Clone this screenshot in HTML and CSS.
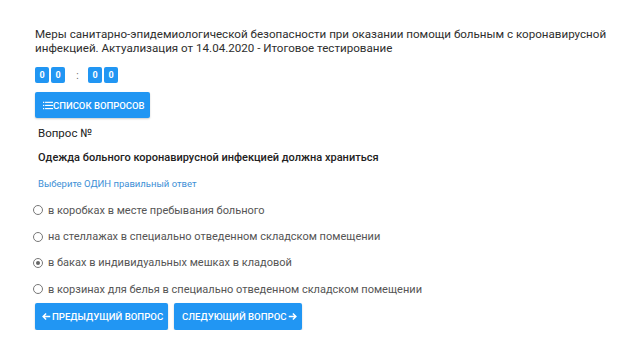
FILE: index.html
```html
<!DOCTYPE html>
<html lang="ru">
<head>
<meta charset="utf-8">
<link rel="stylesheet" href="styles.css">
</head>
<body>
<main class="page">
  <h1 class="title">Меры санитарно-эпидемиологической безопасности при оказании помощи больным с коронавирусной инфекцией. Актуализация от 14.04.2020 - Итоговое тестирование</h1>
  <div class="timer">
    <span class="digit">0</span><span class="digit">0</span><span class="colon">:</span><span class="digit">0</span><span class="digit">0</span>
  </div>
  <button class="btn btn-list"><svg class="ico" viewBox="0 0 12 10" width="10" height="9"><rect x="0" y="0.5" width="1.5" height="1.5" fill="#fff"/><rect x="0" y="4.2" width="1.5" height="1.5" fill="#fff"/><rect x="0" y="8" width="1.5" height="1.5" fill="#fff"/><rect x="2.5" y="0.5" width="9.5" height="1.4" fill="#fff"/><rect x="2.5" y="4.2" width="9.5" height="1.4" fill="#fff"/><rect x="2.5" y="8" width="9.5" height="1.4" fill="#fff"/></svg>СПИСОК ВОПРОСОВ</button>
  <h2 class="qnum">Вопрос №</h2>
  <p class="qtext">Одежда больного коронавирусной инфекцией должна храниться</p>
  <p class="hint">Выберите ОДИН правильный ответ</p>
  <ul class="options">
    <li class="opt"><span class="radio"></span>в коробках в месте пребывания больного</li>
    <li class="opt"><span class="radio"></span>на стеллажах в специально отведенном складском помещении</li>
    <li class="opt"><span class="radio checked"></span>в баках в индивидуальных мешках в кладовой</li>
    <li class="opt"><span class="radio"></span>в корзинах для белья в специально отведенном складском помещении</li>
  </ul>
  <div class="nav">
    <button class="btn btn-nav btn-prev"><svg viewBox="0 0 12 10" width="9" height="9"><path d="M11 5H1.5M5.5 1L1.5 5L5.5 9" fill="none" stroke="#fff" stroke-width="2"/></svg>ПРЕДЫДУЩИЙ ВОПРОС</button>
    <button class="btn btn-nav btn-next">СЛЕДУЮЩИЙ ВОПРОС<svg viewBox="0 0 12 10" width="9" height="9"><path d="M1 5H10.5M6.5 1L10.5 5L6.5 9" fill="none" stroke="#fff" stroke-width="2"/></svg></button>
  </div>
</main>
</body>
</html>
```
FILE: styles.css
```css
* { box-sizing: border-box; }
html, body { margin: 0; padding: 0; background: #fff; }
body { font-family: Roboto, "Noto Sans", sans-serif; color: #222; }
.page { padding: 27px 20px 0 35px; display: flex; flex-direction: column; align-items: flex-start; }
.title { font-size: 11.6px; font-weight: 400; line-height: 14px; margin: 0; color: #2e2e2e; }
.timer { display: flex; align-items: center; margin-top: 12px; height: 16px; }
.digit { width: 14px; height: 16px; background: #2196f3; color: #fff; font-size: 9px; font-weight: 700; display: flex; align-items: center; justify-content: center; border-radius: 2px; margin-right: 2px; }
.colon { width: 21px; text-align: center; font-size: 10px; color: #666; }
.btn { border: 0; background: #2196f3; color: #fff; font-family: Roboto, sans-serif; font-size: 9.5px; font-weight: 500; border-radius: 2px; display: flex; align-items: center; gap: 1px; cursor: pointer; white-space: nowrap; box-shadow: 0 1px 2px rgba(0,0,0,.2); }
.btn-list { margin-top: 9px; height: 26px; width: 115px; padding: 0 0 0 8px; gap: 0; }
.qnum { font-size: 11.5px; font-weight: 400; line-height: 16px; margin: 7px 0 0 3px; color: #222; }
.qtext { font-size: 11px; font-weight: 500; line-height: 14px; margin: 10px 0 0 3px; color: #222; }
.hint { font-size: 9.5px; line-height: 12px; color: #3d8fd6; margin: 13px 0 0 3px; }
.options { list-style: none; margin: 7px 0 0 -2px; padding: 0; }
.opt { display: flex; align-items: center; height: 26.4px; font-size: 11px; color: #555; }
.radio { width: 10px; height: 10px; border: 1px solid #777; border-radius: 50%; margin-right: 5px; position: relative; flex: none; }
.radio.checked::after { content: ""; position: absolute; left: 2px; top: 2px; width: 4px; height: 4px; border-radius: 50%; background: #666; }
.nav { display: flex; gap: 6px; }
.btn-nav { height: 27px; font-size: 9.6px; gap: 1px; }
.btn-prev { width: 133px; padding: 0 0 0 7px; }
.btn-next { width: 128px; padding: 0 0 0 8px; }
```
